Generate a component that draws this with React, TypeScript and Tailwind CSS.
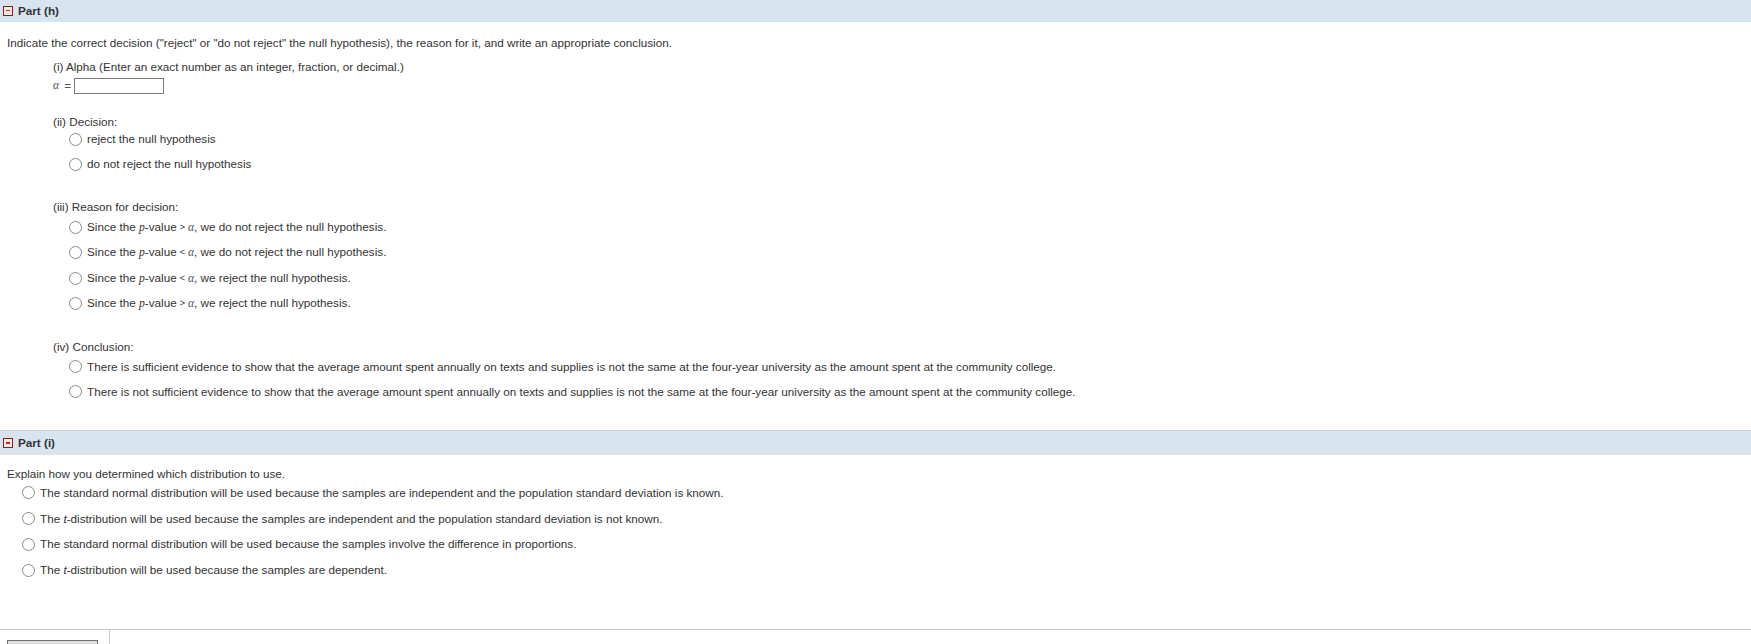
import React from "react";

const font = { fontFamily: '"Liberation Sans", Arial, sans-serif' };

const Radio = () => (
  <span className="inline-block w-[13px] h-[13px] rounded-full border border-[#8a8a8a] bg-white shrink-0" />
);

const Alpha = () => (
  <span className="italic text-[#555]" style={{ fontFamily: '"Liberation Serif", serif' }}>
    α
  </span>
);

const Lt = () => <span className="text-[9px] mx-[3px] align-[1px]">&lt;</span>;
const Gt = () => <span className="text-[9px] mx-[3px] align-[1px]">&gt;</span>;

const P = () => <i style={{ fontFamily: '"Liberation Serif", serif' }}>p</i>;

const PartHeader = ({ label, top }: { label: string; top?: boolean }) => (
  <div
    className={
      top
        ? "h-[22px] bg-[#d9e5ee] flex items-center pl-[3px] pb-[1px]"
        : "h-[25px] bg-[#d9e5ee] border-t border-[#c9c9c9] flex items-center pl-[3px]"
    }
  >
    <span className="w-[10px] h-[10px] border border-[#8c1c1c] bg-[#f6e3e3] flex items-center justify-center">
      <span className="block w-[4px] h-[1.5px] bg-[#b03030]" />
    </span>
    <span className="ml-[5px] text-[11.7px] font-bold text-[#333]">{label}</span>
  </div>
);

const Option = ({ children }: { children: React.ReactNode }) => (
  <div className="h-[16px] flex items-center">
    <Radio />
    <span className="ml-[5px]">{children}</span>
  </div>
);

export default function App() {
  return (
    <div className="w-[1751px] h-[644px] bg-white overflow-hidden text-[11.7px] text-[#333] leading-[16px]" style={font}>
      <PartHeader label="Part (h)" top />

      <div className="pl-[7px] pt-[13px]">
        <div>
          Indicate the correct decision ("reject" or "do not reject" the null hypothesis), the reason for it, and write an appropriate conclusion.
        </div>

        <div className="pl-[46px]">
          <div className="mt-[8px]">(i) Alpha (Enter an exact number as an integer, fraction, or decimal.)</div>
          <div className="mt-[3px] h-[16px] flex items-center">
            <Alpha />
            <span className="ml-[5px] text-[#555]">=</span>
            <span className="ml-[3px] w-[90px] h-[16px] border border-[#7a7a7a] bg-white" />
          </div>

          <div className="mt-[20px]">(ii) Decision:</div>
          <div className="pl-[16px] mt-[1px] flex flex-col gap-[9px]">
            <Option>reject the null hypothesis</Option>
            <Option>do not reject the null hypothesis</Option>
          </div>

          <div className="mt-[27px]">(iii) Reason for decision:</div>
          <div className="pl-[16px] mt-[4px] flex flex-col gap-[9.6px]">
            <Option>
              Since the <P />-value<Gt /><Alpha />, we do not reject the null hypothesis.
            </Option>
            <Option>
              Since the <P />-value<Lt /><Alpha />, we do not reject the null hypothesis.
            </Option>
            <Option>
              Since the <P />-value<Lt /><Alpha />, we reject the null hypothesis.
            </Option>
            <Option>
              Since the <P />-value<Gt /><Alpha />, we reject the null hypothesis.
            </Option>
          </div>

          <div className="mt-[27px]">(iv) Conclusion:</div>
          <div className="pl-[16px] mt-[4px] flex flex-col gap-[9px]">
            <Option>
              There is sufficient evidence to show that the average amount spent annually on texts and supplies is not the same at the four-year university as the amount spent at the community college.
            </Option>
            <Option>
              There is not sufficient evidence to show that the average amount spent annually on texts and supplies is not the same at the four-year university as the amount spent at the community college.
            </Option>
          </div>
        </div>
      </div>

      <div className="mt-[30px]">
        <PartHeader label="Part (i)" />
      </div>

      <div className="pl-[7px] pt-[11px]">
        <div>Explain how you determined which distribution to use.</div>
        <div className="pl-[15px] mt-[3px] flex flex-col gap-[9.8px]">
          <Option>
            The standard normal distribution will be used because the samples are independent and the population standard deviation is known.
          </Option>
          <Option>
            The <i>t</i>-distribution will be used because the samples are independent and the population standard deviation is not known.
          </Option>
          <Option>
            The standard normal distribution will be used because the samples involve the difference in proportions.
          </Option>
          <Option>
            The <i>t</i>-distribution will be used because the samples are dependent.
          </Option>
        </div>
      </div>

      <div className="mt-[51px] border-t border-[#c8c8c8] flex">
        <div className="w-[110px] h-[40px] border-r border-[#c8c8c8] pl-[7px] pt-[10px]">
          <button
            className="w-[91px] h-[22px] border border-[#707070] bg-[#e1e1e1] text-[11.7px] text-black flex items-start justify-center pt-[2px] leading-[14px]"
            style={font}
          >
            Submit Answer
          </button>
        </div>
      </div>
    </div>
  );
}
